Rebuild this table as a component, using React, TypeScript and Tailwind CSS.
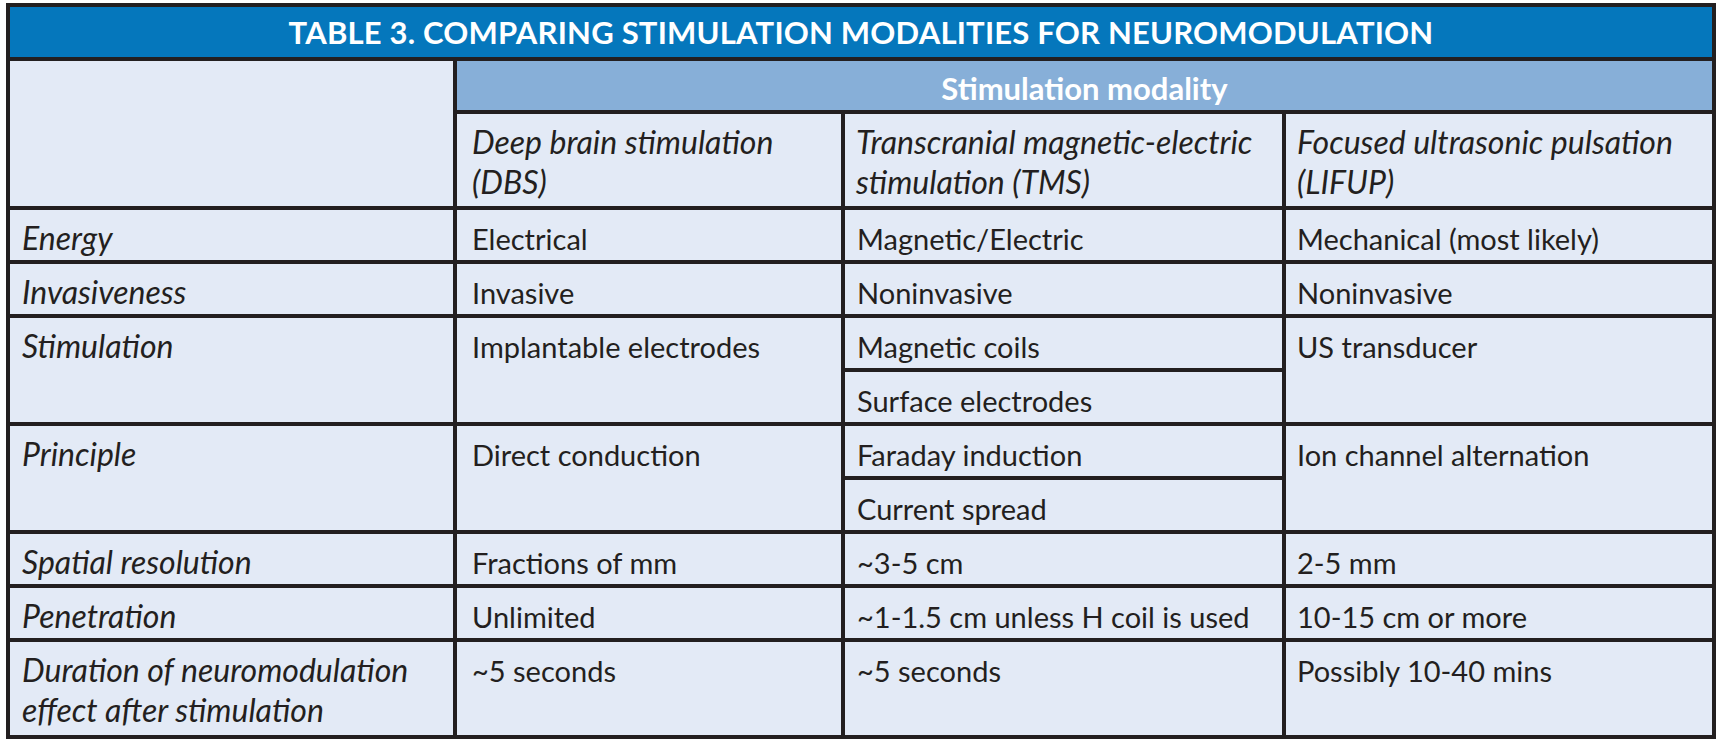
const font = { fontFamily: "Lato, 'Open Sans', sans-serif" };

type Row = {
  label: string[];
  dbs: string;
  tms: string[];
  lifup: string;
};

const rows: Row[] = [
  { label: ["Energy"], dbs: "Electrical", tms: ["Magnetic/Electric"], lifup: "Mechanical (most likely)" },
  { label: ["Invasiveness"], dbs: "Invasive", tms: ["Noninvasive"], lifup: "Noninvasive" },
  { label: ["Stimulation"], dbs: "Implantable electrodes", tms: ["Magnetic coils", "Surface electrodes"], lifup: "US transducer" },
  { label: ["Principle"], dbs: "Direct conduction", tms: ["Faraday induction", "Current spread"], lifup: "Ion channel alternation" },
  { label: ["Spatial resolution"], dbs: "Fractions of mm", tms: ["~3-5 cm"], lifup: "2-5 mm" },
  { label: ["Penetration"], dbs: "Unlimited", tms: ["~1-1.5 cm unless H coil is used"], lifup: "10-15 cm or more" },
  {
    label: ["Duration of neuromodulation", "effect after stimulation"],
    dbs: "~5 seconds",
    tms: ["~5 seconds"],
    lifup: "Possibly 10-40 mins",
  },
];

function Cell({
  children,
  italic,
  span,
  className = "",
}: {
  children?: React.ReactNode;
  italic?: boolean;
  span?: number;
  className?: string;
}) {
  return (
    <div
      className={`bg-[#e3eaf6] text-[#231f20] leading-[40px] ${
        italic ? "italic text-[32px] pt-[8px]" : "text-[29px] pt-[9px]"
      } ${span === 2 ? "row-span-2" : ""} ${className}`}
    >
      {children}
    </div>
  );
}

export default function App() {
  return (
    <div className="w-[1720px] h-[744px] bg-white pt-[3px] pl-[6px]" style={font}>
      <div className="grid w-fit bg-[#231f20] p-[4px] gap-[4px] grid-cols-[443px_384px_437px_426px] grid-rows-[50px_49px_92px_repeat(8,50px)_93px]">
        {/* title */}
        <div className="col-span-4 bg-[#0577bc] flex items-center justify-center text-white font-bold text-[31px] tracking-[0.2px] uppercase">
          Table 3. Comparing stimulation modalities for neuromodulation
        </div>

        {/* corner + subheader */}
        <div className="row-span-2 bg-[#e3eaf6]" />
        <div className="col-span-3 bg-[#87afd8] flex items-center justify-center pt-[6px] text-white font-bold text-[31px]">
          Stimulation modality
        </div>

        {/* column heads */}
        <Cell italic className="pl-[15px]">
          Deep brain stimulation
          <br />
          (DBS)
        </Cell>
        <Cell italic className="pl-[11px]">
          Transcranial magnetic-electric
          <br />
          stimulation (TMS)
        </Cell>
        <Cell italic className="pl-[11px]">
          Focused ultrasonic pulsation
          <br />
          (LIFUP)
        </Cell>

        {rows.map((r) => {
          const span = r.tms.length === 2 ? 2 : undefined;
          return (
            <div key={r.label[0]} className="contents">
              <Cell italic span={span} className="pl-[12px]">
                {r.label.map((l, i) => (
                  <div key={i}>{l}</div>
                ))}
              </Cell>
              <Cell span={span} className="pl-[15px]">
                {r.dbs}
              </Cell>
              <Cell className="pl-[12px]">{r.tms[0]}</Cell>
              <Cell span={span} className="pl-[11px]">
                {r.lifup}
              </Cell>
              {r.tms.length === 2 && <Cell className="pl-[12px] col-start-3">{r.tms[1]}</Cell>}
            </div>
          );
        })}
      </div>
    </div>
  );
}
